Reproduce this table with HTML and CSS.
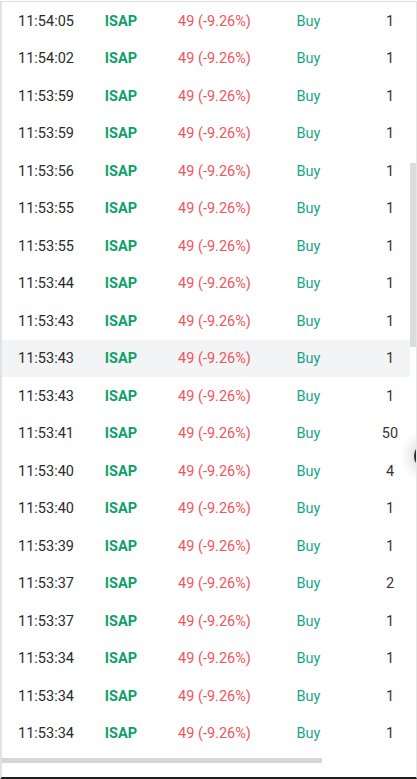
FILE: index.html
```html
<!DOCTYPE html>
<html>
<head>
  <meta charset="utf-8">
  <link rel="stylesheet" href="styles.css">
  <title>Trades</title>
</head>
<body>
  <div class="frame">
    <div class="viewport">
      <div class="list">
        <div class="rows">
          <div class="row"><span class="time">11:54:05</span><span class="symbol">ISAP</span><span class="price">49 (-9.26%)</span><span class="side">Buy</span><span class="qty">1</span><span></span></div>
          <div class="row"><span class="time">11:54:02</span><span class="symbol">ISAP</span><span class="price">49 (-9.26%)</span><span class="side">Buy</span><span class="qty">1</span><span></span></div>
          <div class="row"><span class="time">11:53:59</span><span class="symbol">ISAP</span><span class="price">49 (-9.26%)</span><span class="side">Buy</span><span class="qty">1</span><span></span></div>
          <div class="row"><span class="time">11:53:59</span><span class="symbol">ISAP</span><span class="price">49 (-9.26%)</span><span class="side">Buy</span><span class="qty">1</span><span></span></div>
          <div class="row"><span class="time">11:53:56</span><span class="symbol">ISAP</span><span class="price">49 (-9.26%)</span><span class="side">Buy</span><span class="qty">1</span><span></span></div>
          <div class="row"><span class="time">11:53:55</span><span class="symbol">ISAP</span><span class="price">49 (-9.26%)</span><span class="side">Buy</span><span class="qty">1</span><span></span></div>
          <div class="row"><span class="time">11:53:55</span><span class="symbol">ISAP</span><span class="price">49 (-9.26%)</span><span class="side">Buy</span><span class="qty">1</span><span></span></div>
          <div class="row"><span class="time">11:53:44</span><span class="symbol">ISAP</span><span class="price">49 (-9.26%)</span><span class="side">Buy</span><span class="qty">1</span><span></span></div>
          <div class="row"><span class="time">11:53:43</span><span class="symbol">ISAP</span><span class="price">49 (-9.26%)</span><span class="side">Buy</span><span class="qty">1</span><span></span></div>
          <div class="row hover"><span class="time">11:53:43</span><span class="symbol">ISAP</span><span class="price">49 (-9.26%)</span><span class="side">Buy</span><span class="qty">1</span><span></span></div>
          <div class="row"><span class="time">11:53:43</span><span class="symbol">ISAP</span><span class="price">49 (-9.26%)</span><span class="side">Buy</span><span class="qty">1</span><span></span></div>
          <div class="row"><span class="time">11:53:41</span><span class="symbol">ISAP</span><span class="price">49 (-9.26%)</span><span class="side">Buy</span><span class="qty">50</span><span></span></div>
          <div class="row"><span class="time">11:53:40</span><span class="symbol">ISAP</span><span class="price">49 (-9.26%)</span><span class="side">Buy</span><span class="qty">4</span><span></span></div>
          <div class="row"><span class="time">11:53:40</span><span class="symbol">ISAP</span><span class="price">49 (-9.26%)</span><span class="side">Buy</span><span class="qty">1</span><span></span></div>
          <div class="row"><span class="time">11:53:39</span><span class="symbol">ISAP</span><span class="price">49 (-9.26%)</span><span class="side">Buy</span><span class="qty">1</span><span></span></div>
          <div class="row"><span class="time">11:53:37</span><span class="symbol">ISAP</span><span class="price">49 (-9.26%)</span><span class="side">Buy</span><span class="qty">2</span><span></span></div>
          <div class="row"><span class="time">11:53:37</span><span class="symbol">ISAP</span><span class="price">49 (-9.26%)</span><span class="side">Buy</span><span class="qty">1</span><span></span></div>
          <div class="row"><span class="time">11:53:34</span><span class="symbol">ISAP</span><span class="price">49 (-9.26%)</span><span class="side">Buy</span><span class="qty">1</span><span></span></div>
          <div class="row"><span class="time">11:53:34</span><span class="symbol">ISAP</span><span class="price">49 (-9.26%)</span><span class="side">Buy</span><span class="qty">1</span><span></span></div>
          <div class="row"><span class="time">11:53:34</span><span class="symbol">ISAP</span><span class="price">49 (-9.26%)</span><span class="side">Buy</span><span class="qty">1</span><span></span></div>
        </div>
      </div>
      <div class="vscroll"><div class="vthumb"></div></div>
    </div>
    <div class="hscroll"><div class="hthumb"></div></div>
    <div class="edge-knob"></div>
  </div>
</body>
</html>
```

FILE: styles.css
```css
/* Trade ticker list */
body {
  margin: 0;
  padding-top: 1px;
  background-color: #fff;
  font-family: Roboto, "Liberation Sans", sans-serif;
  font-size: 14.5px;
}

.frame {
  position: relative;
  height: 775px;
  border-top: 1px solid #dcdcdc;
  border-left: 2px solid #e2e2e2;
  border-right: 1px solid #e6e6e6;
  border-bottom: 2px solid #1e1e1e;
  overflow: hidden;
}

.viewport {
  display: flex;
}

.list {
  width: 408px;
  height: 750px;
  overflow: hidden;
}

.rows {
  width: 520px;
}

.row {
  display: grid;
  grid-template-columns: 88px 62px 125px 63px 100px 82px;
  align-items: center;
  height: 37.5px;
  text-align: center;
}

.row span {
  padding-top: 1px;
}

.row.hover {
  background-color: #f3f4f6;
}

.time {
  color: #2b2b2b;
}

.symbol {
  color: #0fa06a;
  font-weight: bold;
}

.price {
  color: #ef565b;
}

.side {
  color: #17a589;
}

.qty {
  color: #3a3333;
}

.vscroll {
  width: 6px;
}

.vthumb {
  margin-top: 161px;
  height: 184px;
  background-color: #dcdcdc;
}

.hscroll {
  height: 25px;
  padding-top: 6px;
  box-sizing: border-box;
}

.hthumb {
  width: 320px;
  height: 5px;
  background-color: #d6d6d6;
}

/* dark knob peeking in from the right edge */
.edge-knob {
  position: absolute;
  top: 440px;
  right: -28px;
  width: 30px;
  height: 28px;
  border-radius: 50%;
  background-color: #2a2a2a;
  box-shadow: 0 0 14px 4px rgba(0, 0, 0, 0.16);
}
```
